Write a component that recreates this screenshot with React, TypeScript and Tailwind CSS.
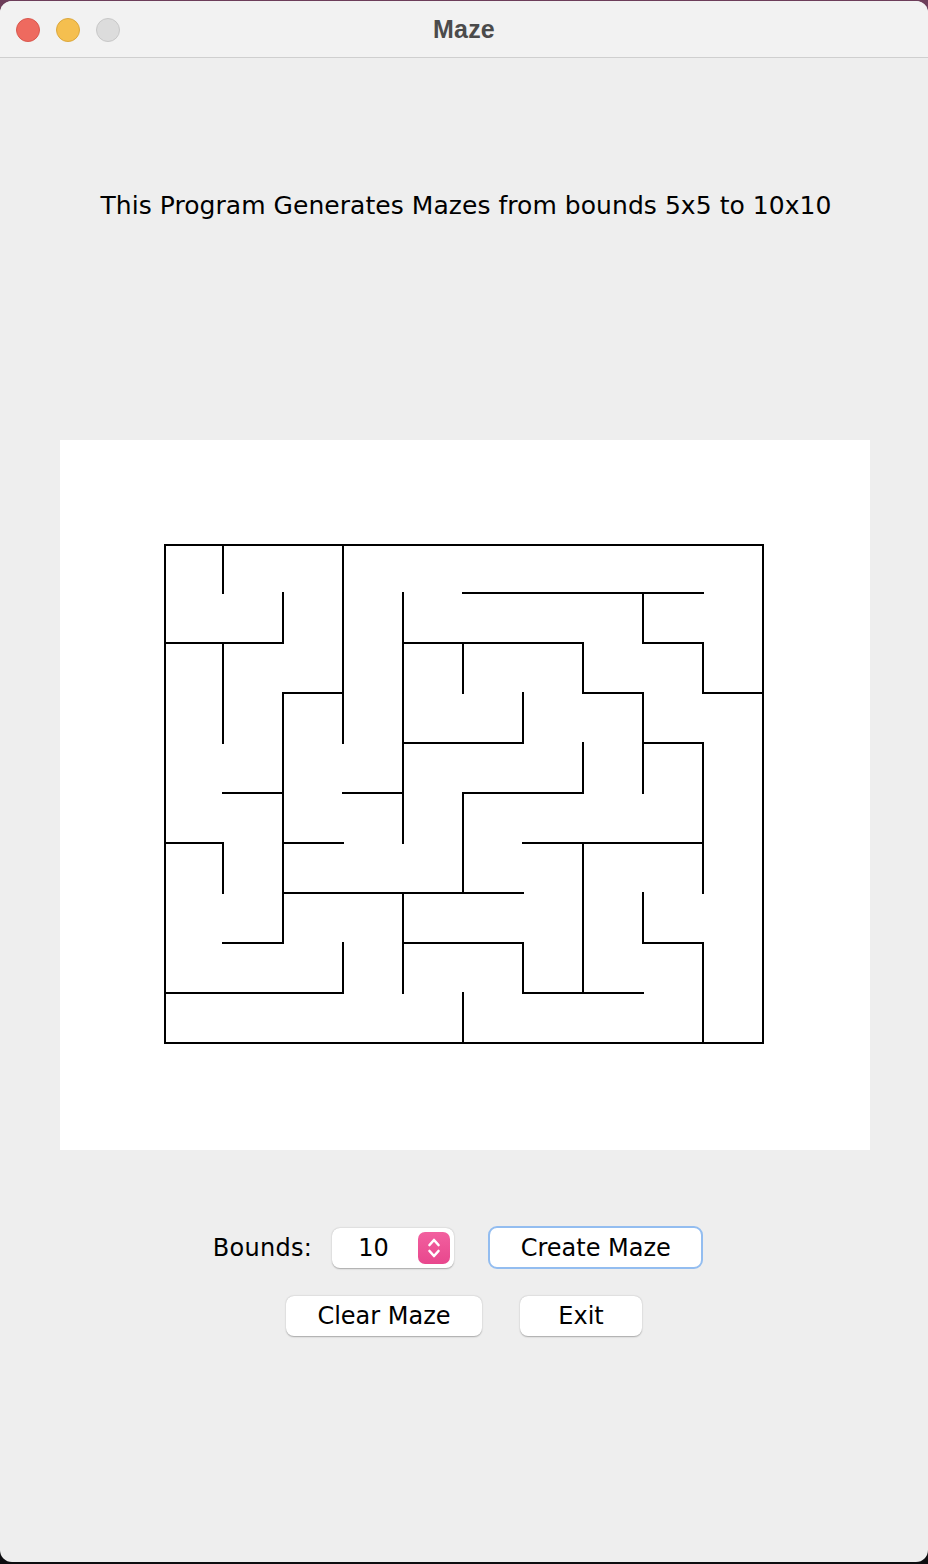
import React from "react";

const C = (i: number) => (i === 0 ? 1 : 60 * i - 1);
const R = (i: number) => (i === 0 ? 1 : 50 * i - 1);

const V: [number, number, number][] = [
  [1, 0, 1], [2, 1, 2], [3, 0, 4], [1, 2, 4], [2, 3, 8], [4, 1, 6], [5, 2, 3],
  [8, 1, 2], [9, 2, 3], [7, 2, 3], [8, 3, 5], [6, 3, 4], [9, 4, 7], [7, 4, 5],
  [5, 5, 7], [1, 6, 7], [4, 7, 9], [3, 8, 9], [5, 9, 10], [7, 6, 9], [8, 7, 8],
  [9, 8, 10], [6, 8, 9],
];
const H: [number, number, number][] = [
  [2, 0, 2], [1, 5, 9], [2, 8, 9], [3, 9, 10], [2, 4, 7], [3, 7, 8], [4, 4, 6],
  [4, 8, 9], [5, 5, 7], [3, 2, 3], [5, 1, 2], [5, 3, 4], [6, 0, 1], [6, 2, 3],
  [7, 2, 6], [8, 1, 2], [8, 4, 6], [9, 0, 3], [6, 6, 9], [8, 8, 9], [9, 6, 8],
];

function Maze() {
  return (
    <svg width="600" height="500" viewBox="0 0 600 500" className="block">
      <g stroke="#000" strokeWidth="2" strokeLinecap="square" fill="none">
        <rect x={C(0)} y={R(0)} width={C(10) - C(0)} height={R(10) - R(0)} />
        {V.map(([x, a, b], i) => (
          <line key={"v" + i} x1={C(x)} y1={R(a)} x2={C(x)} y2={R(b)} />
        ))}
        {H.map(([y, a, b], i) => (
          <line key={"h" + i} x1={C(a)} y1={R(y)} x2={C(b)} y2={R(y)} />
        ))}
      </g>
    </svg>
  );
}

const font = { fontFamily: '"DejaVu Sans", "Liberation Sans", sans-serif' };

export default function App() {
  return (
    <div
      className="w-[928px] h-[1564px] bg-[linear-gradient(180deg,#6d3e5a_0%,#2a1a26_30%,#0d0d10_100%)]"
      style={font}
    >
      <div className="w-[928px] h-[1562px] pt-[1px] flex flex-col">
        <div className="flex-1 flex flex-col rounded-[12px] overflow-hidden bg-[#eeeeee]">
          {/* title bar */}
          <div className="relative h-[57px] shrink-0 bg-[#f2f2f2] border-b border-[#cfcfcf] flex items-center justify-center">
            <div className="absolute left-[16px] top-[17px] flex gap-[16px]">
              <div className="w-[24px] h-[24px] rounded-full bg-[#ee6a5f] border border-[#d9584e]" />
              <div className="w-[24px] h-[24px] rounded-full bg-[#f5bf4f] border border-[#dca83d]" />
              <div className="w-[24px] h-[24px] rounded-full bg-[#dcdcdc] border border-[#c8c8c8]" />
            </div>
            <span
              className="text-[25px] font-bold text-[#4b4b4b] tracking-[0.2px] pt-[2px]"
              style={{ fontFamily: '"Liberation Sans", Arial, sans-serif' }}
            >
              Maze
            </span>
          </div>

          {/* heading */}
          <div className="h-[382px] shrink-0 flex justify-center pt-[132px] pl-[4px]">
            <p className="text-[25px] leading-[32px] text-black tracking-[0.05px]">
              This Program Generates Mazes from bounds 5x5 to 10x10
            </p>
          </div>

          {/* maze panel */}
          <div className="ml-[60px] mr-[58px] h-[710px] shrink-0 bg-white pl-[104px] pt-[104px]">
            <Maze />
          </div>

          {/* controls */}
          <div className="pt-[76px] flex flex-col items-center gap-[27px]">
            <div className="flex items-center pr-[12px]">
              <span className="text-[24px] text-black mr-[20px] tracking-[0.3px]">Bounds:</span>
              <div className="w-[122px] h-[40px] bg-white rounded-[8px] shadow-[0_0.5px_1.5px_rgba(0,0,0,0.3)] flex items-center justify-between pl-[26px] pr-[4px]">
                <span className="text-[24px] text-black">10</span>
                <div className="w-[32px] h-[32px] rounded-[7px] bg-[linear-gradient(180deg,#f2609f,#e8478d)] flex items-center justify-center">
                  <svg width="16" height="26" viewBox="0 0 16 26" fill="none" stroke="#fff" strokeWidth="2.6" strokeLinecap="round" strokeLinejoin="round">
                    <path d="M3.5 10 L8 5 L12.5 10" />
                    <path d="M3.5 16 L8 21 L12.5 16" />
                  </svg>
                </div>
              </div>
              <div className="ml-[34px] w-[215px] h-[43px] bg-white rounded-[9px] border-[2.5px] border-[#93bdf0] flex items-center justify-center">
                <span className="text-[24px] text-black">Create Maze</span>
              </div>
            </div>
            <div className="flex items-center gap-[38px] ml-[0px]">
              <div className="w-[196px] h-[40px] bg-white rounded-[8px] shadow-[0_0.5px_1.5px_rgba(0,0,0,0.3)] flex items-center justify-center">
                <span className="text-[24px] text-black">Clear Maze</span>
              </div>
              <div className="w-[122px] h-[40px] bg-white rounded-[8px] shadow-[0_0.5px_1.5px_rgba(0,0,0,0.3)] flex items-center justify-center">
                <span className="text-[24px] text-black">Exit</span>
              </div>
            </div>
          </div>
        </div>
      </div>
    </div>
  );
}
